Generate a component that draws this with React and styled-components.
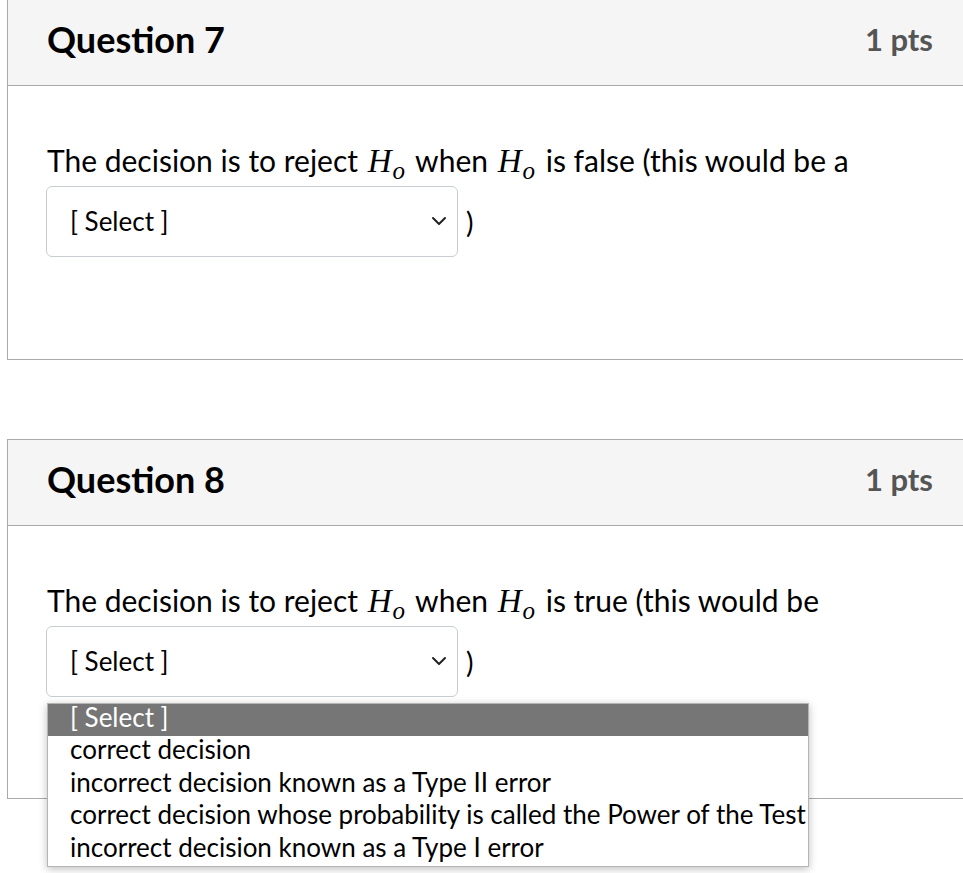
import React from "react";
import styled, { createGlobalStyle } from "styled-components";

const Global = createGlobalStyle`
  html { overflow: hidden; }
  html, body { margin: 0; padding: 0; background: #fff; }
  body {
    min-height: 100vh;
    font-family: Lato, "Noto Sans", sans-serif;
    color: #2d3b45;
  }
`;

const Page = styled.div`
  box-sizing: border-box;
  padding-left: 7px;
  margin-top: -1px;
  width: calc(100% + 10px);
  min-height: 880px;
  display: flex;
  flex-direction: column;
  gap: 79px;
`;

const Card = styled.section`
  border: 1px solid #aaaaaa;
  background: #fff;
`;

const Header = styled.header`
  display: flex;
  align-items: center;
  justify-content: space-between;
  height: 86px;
  padding: 0 39px 7px;
  box-sizing: border-box;
  background: #f5f5f5;
  border-bottom: 1px solid #aaaaaa;
`;

const Title = styled.h2`
  margin: 0;
  font-size: 36px;
  font-weight: 700;
  color: #000;
`;

const Points = styled.span`
  font-size: 31px;
  font-weight: 700;
  color: #555;
`;

const Body = styled.div`
  padding: 52px 39px 0;
  height: ${(p) => p.h}px;
  box-sizing: border-box;
`;

const Prompt = styled.p`
  margin: 0;
  font-size: 30px;
  line-height: 44px;
  color: #000;
`;

const Math = styled.span`
  font-family: "Liberation Serif", "DejaVu Serif", serif;
  font-style: italic;
  font-size: 33px;
  padding: 0 3px 0 2px;
  sub {
    font-size: 25px;
    vertical-align: -7px;
    line-height: 0;
    margin-left: 1px;
  }
`;

const SelectRow = styled.div`
  display: flex;
  align-items: center;
  gap: 8px;
  margin-top: 3px;
  font-size: 28px;
  color: #000;
`;

const SelectWrap = styled.div`
  position: relative;
  margin-left: -1px;
`;

const SelectBox = styled.div`
  box-sizing: border-box;
  width: 412px;
  height: 71px;
  border: 1px solid #c7cdd1;
  border-radius: 6px;
  display: flex;
  align-items: center;
  justify-content: space-between;
  padding: 0 10px 2px 23px;
  font-size: 26px;
  color: #000;
  background: #fff;
`;

const Paren = styled.span`
  font-size: 28px;
`;

const ListBox = styled.ul`
  position: absolute;
  left: 1px;
  top: 77px;
  width: 762px;
  margin: 0;
  padding: 0;
  list-style: none;
  background: #fff;
  border: 1px solid #b5b5b5;
  box-shadow: 0 2px 8px rgba(0, 0, 0, 0.25);
  box-sizing: border-box;
  z-index: 10;
`;

const Option = styled.li`
  height: 32.4px;
  line-height: 27px;
  padding-left: 22px;
  font-size: 26px;
  white-space: nowrap;
  color: ${(p) => (p.active ? "#fff" : "#000")};
  background: ${(p) => (p.active ? "#767676" : "#fff")};
`;

const Chevron = () => (
  <svg width="16" height="10" viewBox="0 0 16 10" fill="none">
    <path d="M2 2l6 6 6-6" stroke="#222" strokeWidth="2" strokeLinecap="round" strokeLinejoin="round" />
  </svg>
);

const H0 = () => (
  <Math>
    H<sub>o</sub>
  </Math>
);

const options = [
  "[ Select ]",
  "correct decision",
  "incorrect decision known as a Type II error",
  "correct decision whose probability is called the Power of the Test",
  "incorrect decision known as a Type I error",
];

const Question = ({ num, tail, open, h }) => (
  <Card>
    <Header>
      <Title>Question {num}</Title>
      <Points>1 pts</Points>
    </Header>
    <Body h={h}>
      <Prompt>
        The decision is to reject <H0 /> when <H0 /> {tail}
      </Prompt>
      <SelectRow>
        <SelectWrap>
          <SelectBox>
            <span>[ Select ]</span>
            <Chevron />
          </SelectBox>
          {open && (
            <ListBox>
              {options.map((o, i) => (
                <Option key={o} active={i === 0}>
                  {o}
                </Option>
              ))}
            </ListBox>
          )}
        </SelectWrap>
        <Paren>)</Paren>
      </SelectRow>
    </Body>
  </Card>
);

export default function App() {
  return (
    <>
      <Global />
      <Page>
        <Question num={7} tail="is false (this would be a" h={273} />
        <Question num={8} tail="is true (this would be" open h={272} />
      </Page>
    </>
  );
}
